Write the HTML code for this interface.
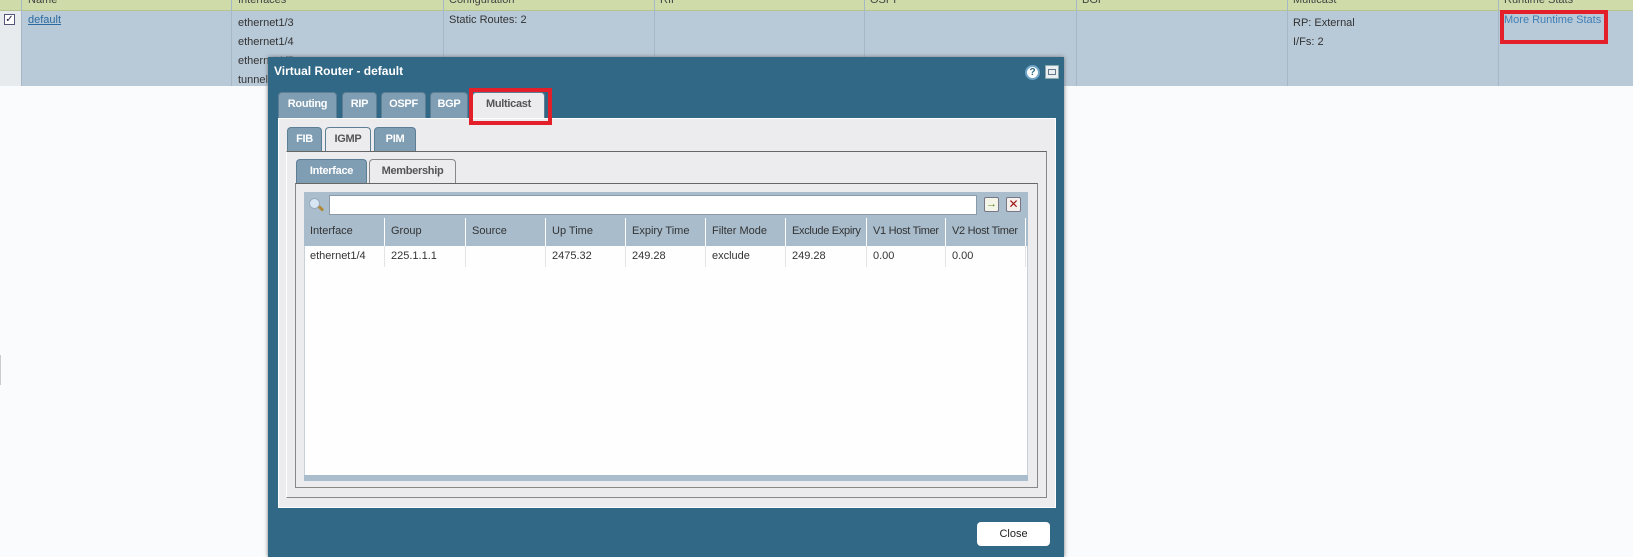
<!DOCTYPE html>
<html><head><style>
*{margin:0;padding:0;box-sizing:border-box}
body{width:1633px;height:552px;background:#f9fbfc;font-family:"Liberation Sans","DejaVu Sans",sans-serif;font-size:11px;color:#333;position:relative;overflow:hidden}
.a{position:absolute}
.hdr{left:0;top:0;width:1633px;height:11px;background:#cfdba9;border-bottom:1px solid #b7c38d;overflow:hidden}
.row{left:0;top:11px;width:1633px;height:75px;background:#b8c9d8}
.vs{top:0;width:1px;height:86px;background:#a6b8c8}
.t{white-space:nowrap}
.ht{top:-6px;color:#444}
.dlg{left:268px;top:57px;width:796px;height:500px;background:#306886;box-shadow:0 0 4px #777}
.tab{height:26px;border:1px solid #5d7f96;border-bottom:none;border-radius:4px 4px 0 0;background:#7f9db3;color:#fff;font-weight:bold;text-align:center;line-height:23px;font-size:11px;letter-spacing:-0.3px}
.tab.on{background:#ececef;color:#555}
.hc{top:218px;height:28px;line-height:27px;border-right:1px solid #fff;padding-left:6px;color:#333}
.dc{top:246px;height:21px;line-height:21px;border-right:1px solid #e4e4e4;padding-left:6px}
</style></head><body>
<div class="a hdr"></div>
<div class="a t ht" style="left:28px">Name</div>
<div class="a t ht" style="left:238px">Interfaces</div>
<div class="a t ht" style="left:449px">Configuration</div>
<div class="a t ht" style="left:660px">RIP</div>
<div class="a t ht" style="left:870px">OSPF</div>
<div class="a t ht" style="left:1082px">BGP</div>
<div class="a t ht" style="left:1293px">Multicast</div>
<div class="a t ht" style="left:1504px">Runtime Stats</div>
<div class="a row"></div>
<div class="a" style="left:0;top:11px;width:21px;height:75px;background:#e7ebee"></div>
<div class="a vs" style="left:21px"></div><div class="a vs" style="left:231px"></div><div class="a vs" style="left:443px"></div><div class="a vs" style="left:654px"></div><div class="a vs" style="left:864px"></div><div class="a vs" style="left:1076px"></div><div class="a vs" style="left:1287px"></div><div class="a vs" style="left:1498px"></div>
<div class="a" style="left:4px;top:14px;width:11px;height:11px;border:1px solid #557;background:#fff;font-size:10px;line-height:9px;text-align:center;color:#224">✓</div>
<div class="a t" style="left:28px;top:14px;color:#2a6aa0;text-decoration:underline">default</div>
<div class="a t" style="left:238px;top:14px;line-height:19px">ethernet1/3<br>ethernet1/4<br>ethernet1/5<br>tunnel</div>
<div class="a t" style="left:449px;top:14px">Static Routes: 2</div>
<div class="a t" style="left:1293px;top:14px;line-height:19px">RP: External<br>I/Fs: 2</div>
<div class="a t" style="left:1504px;top:14px;color:#3f7fb5">More Runtime Stats</div>
<div class="a" style="left:1500px;top:10px;width:108px;height:34px;border:4px solid #e3202a"></div>
<div class="a" style="left:0;top:355px;width:1px;height:30px;background:#ccc"></div>

<div class="a dlg"></div>
<div class="a t" style="left:274px;top:64px;color:#fff;font-weight:bold;font-size:12px">Virtual Router - default</div>
<div class="a" style="left:1025px;top:65px;width:15px;height:15px;border-radius:50%;background:#fff;border:2px solid #6ea3c7;color:#306886;font-weight:bold;font-size:10px;line-height:11px;text-align:center">?</div>
<div class="a" style="left:1045px;top:65px;width:14px;height:14px;background:#e8eef2;border:1px solid #8aa"><div style="margin:3px 2px;height:6px;border:1px solid #678"></div></div>

<div class="a tab" style="left:278px;top:92px;width:59px">Routing</div>
<div class="a tab" style="left:342px;top:92px;width:35px">RIP</div>
<div class="a tab" style="left:381px;top:92px;width:45px">OSPF</div>
<div class="a tab" style="left:430px;top:92px;width:38px">BGP</div>
<div class="a tab on" style="left:472px;top:92px;width:73px">Multicast</div>
<div class="a" style="left:278px;top:118px;width:778px;height:390px;background:#ececef;border:1px solid #fff"></div>
<div class="a" style="left:469px;top:88px;width:83px;height:37px;border:4px solid #e3202a"></div>

<div class="a tab" style="left:287px;top:127px;width:35px;height:25px">FIB</div>
<div class="a tab on" style="left:325px;top:127px;width:46px;height:25px">IGMP</div>
<div class="a tab" style="left:374px;top:127px;width:42px;height:25px">PIM</div>
<div class="a" style="left:286px;top:151px;width:761px;height:347px;border:1px solid #888;border-left-color:#fff;border-top-color:#666"></div>
<div class="a tab" style="left:296px;top:159px;width:71px;height:25px">Interface</div>
<div class="a tab on" style="left:369px;top:159px;width:87px;height:25px;border-color:#888">Membership</div>
<div class="a" style="left:295px;top:183px;width:743px;height:305px;border:1px solid #888;border-top-color:#666"></div>

<div class="a" style="left:304px;top:192px;width:724px;height:289px;background:#fefefe;border:1px solid #c8d2da"></div>
<div class="a" style="left:304px;top:192px;width:724px;height:26px;background:#a9bdcd"></div>
<div class="a" style="left:309px;top:198px;width:11px;height:11px;border-radius:50%;background:#d8e6f4;border:1px solid #9ab"></div>
<div class="a" style="left:318px;top:207px;width:6px;height:3px;background:#b08a3a;transform:rotate(45deg)"></div>
<div class="a" style="left:329px;top:195px;width:648px;height:20px;background:#fff;border:1px solid #8a9aa8"></div>
<div class="a" style="left:984px;top:197px;width:15px;height:15px;background:#f4f4e8;border:1px solid #778;border-radius:2px;color:#5a8a20;font-size:11px;line-height:12px;text-align:center;font-weight:bold">→</div>
<div class="a" style="left:1006px;top:197px;width:15px;height:15px;background:#f6f0ec;border:1px solid #778;border-radius:2px;color:#a01010;font-size:12px;line-height:13px;text-align:center;font-weight:bold">✕</div>
<div class="a" style="left:304px;top:218px;width:724px;height:28px;background:#a8bccc"></div>
<div class="a t hc" style="left:304px;width:81px">Interface</div>
<div class="a t hc" style="left:385px;width:81px">Group</div>
<div class="a t hc" style="left:466px;width:80px">Source</div>
<div class="a t hc" style="left:546px;width:80px">Up Time</div>
<div class="a t hc" style="left:626px;width:80px">Expiry Time</div>
<div class="a t hc" style="left:706px;width:80px">Filter Mode</div>
<div class="a t hc" style="left:786px;width:81px;letter-spacing:-0.3px">Exclude Expiry</div>
<div class="a t hc" style="left:867px;width:79px;letter-spacing:-0.3px">V1 Host Timer</div>
<div class="a t hc" style="left:946px;width:80px;letter-spacing:-0.3px">V2 Host Timer</div>
<div class="a t dc" style="left:304px;width:81px">ethernet1/4</div>
<div class="a t dc" style="left:385px;width:81px">225.1.1.1</div>
<div class="a t dc" style="left:466px;width:80px"></div>
<div class="a t dc" style="left:546px;width:80px">2475.32</div>
<div class="a t dc" style="left:626px;width:80px">249.28</div>
<div class="a t dc" style="left:706px;width:80px">exclude</div>
<div class="a t dc" style="left:786px;width:81px">249.28</div>
<div class="a t dc" style="left:867px;width:79px">0.00</div>
<div class="a t dc" style="left:946px;width:80px">0.00</div>
<div class="a" style="left:304px;top:475px;width:724px;height:6px;background:#a9bdcc"></div>

<div class="a" style="left:977px;top:522px;width:73px;height:24px;background:#fff;border-radius:4px;text-align:center;line-height:24px;color:#222">Close</div>
</body></html>
